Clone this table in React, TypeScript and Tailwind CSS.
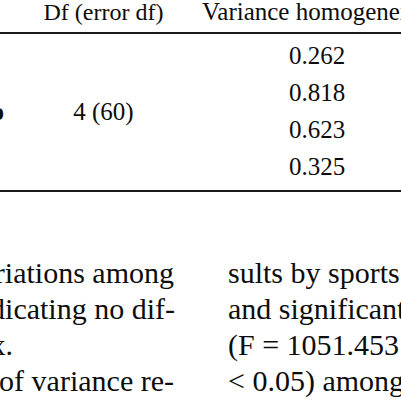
import React from 'react';

const ROWS = ['0.262', '0.818', '0.623', '0.325'];

const LEFT_LINES = [
  { text: 'showed variations among', end: 174 },
  { text: 'groups, indicating no dif-', end: 175 },
  { text: 'ference in each index.', end: 13 },
  { text: 'The analysis of variance re-', end: 174 },
];

const RIGHT_LINES = [
  'sults by sports events showed',
  'and significant differences',
  '(F = 1051.453 and p',
  '< 0.05) among the groups',
];

export default function App() {
  return (
    <div
      className="relative h-[401px] w-[401px] overflow-hidden bg-white text-[#0d0d0d]"
      style={{ fontFamily: '"Liberation Serif", "Times New Roman", serif' }}
    >
      {/* table */}
      <div className="w-[401px]">
        {/* header */}
        <div className="flex h-[32px] leading-[24px]">
          <div className="w-[20px] shrink-0" />
          <div className="w-[167px] shrink-0 whitespace-nowrap text-center text-[24px]">Df (error df)</div>
          <div className="shrink-0 whitespace-nowrap pl-[15px] text-[25px]">Variance homogeneity</div>
        </div>
        <div className="h-[2px] bg-[#1a1a1a]" />

        {/* body */}
        <div className="flex pb-[5px] pt-[3px] text-[25px] leading-[37px]">
          <div className="flex w-[20px] shrink-0 items-center justify-end">
            <span className="mr-[16px] font-bold">o</span>
          </div>
          <div className="flex w-[167px] shrink-0 items-center justify-center whitespace-nowrap">4 (60)</div>
          <div className="flex w-[260px] shrink-0 flex-col items-center">
            {ROWS.map((v) => (
              <div key={v}>{v}</div>
            ))}
          </div>
        </div>
        <div className="h-[2px] bg-[#1a1a1a]" />
      </div>

      {/* two text columns */}
      <div className="mt-[63px] flex text-[30px] leading-[36px]">
        <div className="w-[228px] shrink-0">
          {LEFT_LINES.map((l) => (
            <div key={l.text} className="relative h-[36px]">
              <span className="absolute top-0 whitespace-nowrap" style={{ right: 228 - l.end }}>
                {l.text}
              </span>
            </div>
          ))}
        </div>
        <div className="shrink-0 whitespace-nowrap">
          {RIGHT_LINES.map((t) => (
            <div key={t} className="h-[36px]">{t}</div>
          ))}
        </div>
      </div>
    </div>
  );
}
